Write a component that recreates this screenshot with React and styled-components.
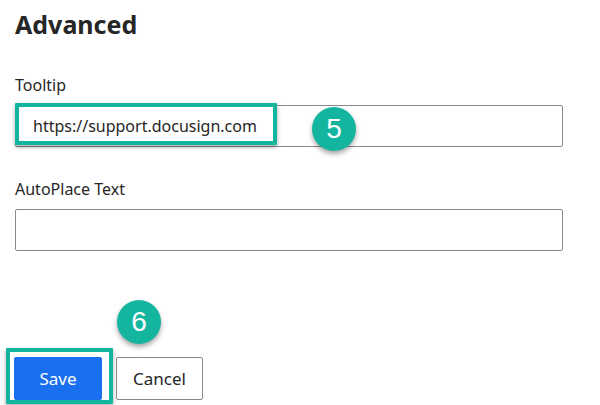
import React from "react";
import styled, { createGlobalStyle } from "styled-components";

const GlobalStyle = createGlobalStyle`
  body {
    margin: 0;
    background: #ffffff;
    font-family: "Noto Sans", "Lato", sans-serif;
    color: #262626;
  }
`;

const Page = styled.div`
  position: relative;
  width: 600px;
  height: 405px;
  overflow: hidden;
  padding: 8px 37px 0 15px;
  box-sizing: border-box;
`;

const Title = styled.h1`
  margin: 0 0 34px 0;
  font-size: 25px;
  line-height: 32px;
  font-weight: 700;
  color: #262626;
`;

const Field = styled.div`
  position: relative;
  margin-bottom: ${(p) => p.gap || 0}px;
`;

const Label = styled.div`
  font-size: 16px;
  line-height: 22px;
  color: #262626;
  margin-bottom: 9px;
`;

const Input = styled.div`
  height: 42px;
  box-sizing: border-box;
  border: 1px solid #8a8a8e;
  border-radius: 2px;
  padding: 0 17px;
  display: flex;
  align-items: center;
  font-size: 16px;
  color: #262626;
`;

const Highlight = styled.div`
  position: absolute;
  left: ${(p) => p.left}px;
  top: ${(p) => p.top}px;
  width: ${(p) => p.width}px;
  height: ${(p) => p.height}px;
  box-sizing: border-box;
  border: 4px solid #14b59f;
  border-radius: 1px;
  box-shadow: 0 2px 4px rgba(0, 0, 0, 0.35);
  pointer-events: none;
`;

const Badge = styled.div`
  position: absolute;
  left: ${(p) => p.left}px;
  top: ${(p) => p.top}px;
  width: 44px;
  height: 44px;
  border-radius: 50%;
  background: #14b59f;
  color: #ffffff;
  font-family: "Liberation Sans", Arial, sans-serif;
  font-size: 28px;
  display: flex;
  align-items: center;
  justify-content: center;
  box-shadow: 0 3px 5px rgba(0, 0, 0, 0.35);
`;

const Actions = styled.div`
  position: relative;
  display: flex;
  gap: 14px;
  margin-left: -1px;
`;

const Button = styled.button`
  height: 43px;
  width: ${(p) => p.width}px;
  box-sizing: border-box;
  border-radius: 2px;
  font-family: "Noto Sans", "Lato", sans-serif;
  font-size: 17px;
  cursor: pointer;
  background: ${(p) => (p.primary ? "#1a6ef0" : "#ffffff")};
  color: ${(p) => (p.primary ? "#ffffff" : "#262626")};
  border: 1px solid ${(p) => (p.primary ? "#1a6ef0" : "#8a8a8e")};
`;

export default function App() {
  return (
    <>
      <GlobalStyle />
      <Page>
        <Title>Advanced</Title>
        <Field gap={31}>
          <Label>Tooltip</Label>
          <Input>https://support.docusign.com</Input>
          <Highlight left={0} top={29} width={262} height={42} />
          <Badge left={297} top={33}>5</Badge>
        </Field>
        <Field gap={106}>
          <Label>AutoPlace Text</Label>
          <Input />
        </Field>
        <Actions>
          <Button primary width={88}>Save</Button>
          <Button width={87}>Cancel</Button>
          <Highlight left={-8} top={-9} width={107} height={56} />
          <Badge left={103} top={-57}>6</Badge>
        </Actions>
      </Page>
    </>
  );
}
